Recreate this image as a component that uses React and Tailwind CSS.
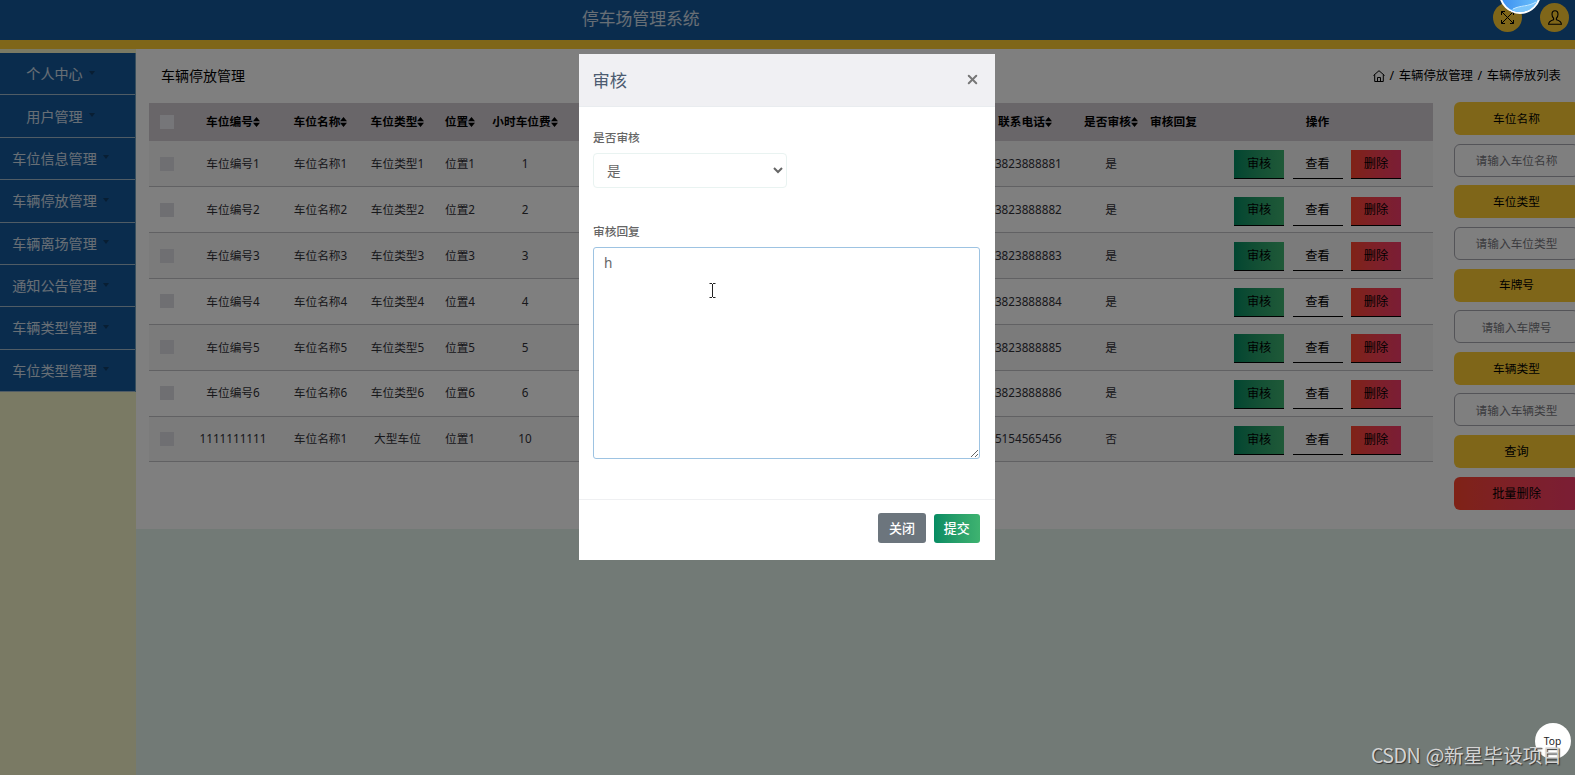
import React, { useState } from 'react';
import { X } from 'lucide-react';

const menuItems = [
  '个人中心', '用户管理', '车位信息管理', '车辆停放管理',
  '车辆离场管理', '通知公告管理', '车辆类型管理', '车位类型管理'
];

const rows = [
  { code: '车位编号1', name: '车位名称1', type: '车位类型1', place: '位置1', fee: '1', phone: '13823888881', passed: '是' },
  { code: '车位编号2', name: '车位名称2', type: '车位类型2', place: '位置2', fee: '2', phone: '13823888882', passed: '是' },
  { code: '车位编号3', name: '车位名称3', type: '车位类型3', place: '位置3', fee: '3', phone: '13823888883', passed: '是' },
  { code: '车位编号4', name: '车位名称4', type: '车位类型4', place: '位置4', fee: '4', phone: '13823888884', passed: '是' },
  { code: '车位编号5', name: '车位名称5', type: '车位类型5', place: '位置5', fee: '5', phone: '13823888885', passed: '是' },
  { code: '车位编号6', name: '车位名称6', type: '车位类型6', place: '位置6', fee: '6', phone: '13823888886', passed: '是' },
  { code: '1111111111', name: '车位名称1', type: '大型车位', place: '位置1', fee: '10', phone: '15154565456', passed: '否' }
];

const filters = [
  { label: '车位名称', placeholder: '请输入车位名称' },
  { label: '车位类型', placeholder: '请输入车位类型' },
  { label: '车牌号', placeholder: '请输入车牌号' },
  { label: '车辆类型', placeholder: '请输入车辆类型' }
];

const SortIcon = () => (
  <svg className="inline-block w-[7px] h-[10px] align-[-1px]" viewBox="0 0 7 10">
    <path d="M3.5 0L7 4.2H0zM3.5 10L0 5.8h7z" />
  </svg>
);

const SortHead = ({ children }) => (
  <th className="font-bold whitespace-nowrap">{children}<SortIcon /></th>
);

const Header = () => (
  <header className="h-[49px] shrink-0 flex bg-[#14589a] border-b-[9px] border-[#ffcc33]">
    <h1 className="flex-1 pl-[582px] pt-[7px] text-[16.8px] leading-6 text-white/80">停车场管理系统</h1>
    <div className="flex gap-[18.5px] pt-[2.5px] pr-[6px]">
      <button className="w-[29px] h-[29px] rounded-full bg-[#ffcc33] flex items-center justify-center">
        <svg className="w-[13px] h-[13px]" viewBox="0 0 13 13" fill="none" stroke="black" strokeWidth="1">
          <path d="M.5 4V.5H4M9 .5h3.5V4M12.5 9v3.5H9M4 12.5H.5V9M.5.5l12 12M12.5.5l-12 12" />
        </svg>
      </button>
      <button className="w-[29px] h-[29px] rounded-full bg-[#ffcc33] flex items-center justify-center">
        <svg className="w-[14px] h-[15px]" viewBox="0 0 14 15" fill="none" stroke="black" strokeWidth="1.1">
          <path d="M7 .7C4.8.7 4 2.2 4 4.2c0 1.900.7 3.300 1.600 4v1.500C3.500 10.400.6 11.300.6 14.200h12.800c0-2.900-2.900-3.800-5-4.500V8.200c.9-.7 1.600-2.100 1.600-4C10 2.200 9.200.7 7 .7z" />
        </svg>
      </button>
    </div>
  </header>
);

const Sidebar = () => (
  <aside className="w-[136px] shrink-0 bg-[#f4f4c8] pt-1">
    <ul className="border-r border-[#6d9cba]">
      {menuItems.map((item) => (
        <li
          key={item}
          className="h-[42.4px] pr-[14px] flex items-center justify-center gap-[6px] bg-[#14589a] border-b border-[#a0b8ca] text-[14.1px] text-white/80"
        >
          {item}
          <span className="mb-0.5 border-x-[3.5px] border-x-transparent border-t-[4px] border-t-[#103c66]" />
        </li>
      ))}
    </ul>
  </aside>
);

const RecordTable = () => (
  <table className="w-[1284px] table-fixed border-collapse text-center text-[11.7px] text-[#303036]">
    <colgroup>
      <col className="w-[37px]" />
      <col className="w-[94px]" />
      <col className="w-[81px]" />
      <col className="w-[73px]" />
      <col className="w-[52px]" />
      <col className="w-[78px]" />
      <col className="w-[409px]" />
      <col className="w-[104px]" />
      <col className="w-[68px]" />
      <col className="w-[57px]" />
      <col className="w-[231px]" />
    </colgroup>
    <thead>
      <tr className="h-[38px] bg-[#d2ccd3] text-black">
        <th><span className="block w-[14px] h-[14px] ml-[11px] bg-[#ececf2]" /></th>
        <SortHead>车位编号</SortHead>
        <SortHead>车位名称</SortHead>
        <SortHead>车位类型</SortHead>
        <SortHead>位置</SortHead>
        <SortHead>小时车位费</SortHead>
        <th />
        <SortHead>联系电话</SortHead>
        <SortHead>是否审核</SortHead>
        <th className="font-bold whitespace-nowrap">审核回复</th>
        <th className="font-bold">操作</th>
      </tr>
    </thead>
    <tbody>
      {rows.map((row) => (
        <tr key={row.phone} className="h-[45.85px] border-b border-[#c2c2c6] odd:bg-[#f6f6f6]">
          <td><span className="block w-[14px] h-[14px] ml-[11px] bg-[#dfdfe5]" /></td>
          <td>{row.code}</td>
          <td>{row.name}</td>
          <td>{row.type}</td>
          <td>{row.place}</td>
          <td>{row.fee}</td>
          <td />
          <td>{row.phone}</td>
          <td>{row.passed}</td>
          <td />
          <td>
            <div className="flex justify-center gap-[8.4px] pt-[2.5px] text-[12.2px] text-black">
              <button className="w-[50px] h-[29px] border-b border-black bg-linear-to-r from-[#008c62] to-[#3eb370]">审核</button>
              <button className="w-[50px] h-[29px] border-b border-black">查看</button>
              <button className="w-[50px] h-[29px] border-b border-black bg-linear-to-r from-[#ff452c] to-[#f63b6b]">删除</button>
            </div>
          </td>
        </tr>
      ))}
    </tbody>
  </table>
);

const FilterPanel = () => (
  <div className="w-[125px] shrink-0 flex flex-col gap-[8.65px] -mt-px text-[11.7px] text-black">
    {filters.map((f) => (
      <React.Fragment key={f.label}>
        <div className="h-[33px] rounded-md bg-[#ffcc33] flex items-center justify-center">{f.label}</div>
        <input
          placeholder={f.placeholder}
          className="h-[33px] w-full rounded-md border border-[#a8a8b0] text-center placeholder:text-[#777780]"
        />
      </React.Fragment>
    ))}
    <button className="h-[33px] pt-0.5 rounded-md bg-[#ffcc33] text-[12.2px]">查询</button>
    <button className="h-[33px] pt-0.5 rounded-md bg-linear-to-r from-[#ff452c] to-[#f63b6b] text-[12.2px]">批量删除</button>
  </div>
);

const ReviewDialog = () => {
  const [status, setStatus] = useState('是');
  const [reply, setReply] = useState('h');

  return (
    <div className="absolute inset-0 bg-black/50 pl-[579px] pt-[54px]">
      <div className="w-[415.5px] h-[506px] flex flex-col bg-white text-[#666]">
        <div className="h-[53px] shrink-0 pl-[13.5px] pr-[14.5px] flex items-center justify-between bg-[#f0f0f3] border-b border-[#e9ecef]">
          <h2 className="pt-0.5 text-[17.2px] text-[#4c5b70]">审核</h2>
          <button className="text-[#777] mb-0.5"><X className="w-[15px] h-[15px]" strokeWidth={3.2} /></button>
        </div>
        <div className="flex-1 px-[14px] pt-[22px] text-[11.7px]">
          <label className="block h-[24px] leading-4 font-medium">是否审核</label>
          <select
            value={status}
            onChange={(e) => setStatus(e.target.value)}
            className="block w-[194px] h-[35px] pl-[9px] rounded border border-[#e9f3f1] bg-white text-[13.6px]"
          >
            <option>是</option>
            <option>否</option>
          </select>
          <label className="block mt-[35px] h-[24px] leading-4 font-medium">审核回复</label>
          <textarea
            value={reply}
            onChange={(e) => setReply(e.target.value)}
            className="block w-[387px] h-[212px] px-[10px] py-[5px] rounded-[3px] border border-[#9dc3e2] outline-none text-[13.6px] leading-5"
          />
        </div>
        <div className="h-[61.5px] shrink-0 flex items-center justify-end gap-[7.5px] px-[14.5px] pb-[3px] border-t border-[#eff0f2] text-[13px] font-medium text-white">
          <button className="w-[48px] h-[30px] rounded-[3px] bg-[#6c757d]">关闭</button>
          <button className="w-[46.5px] h-[28.5px] rounded-[3px] bg-linear-to-r from-[#058c63] to-[#3eb370]">提交</button>
        </div>
      </div>
    </div>
  );
};

const App = () => {
  return (
    <div className="relative w-[1575px] h-[775px] overflow-hidden flex flex-col bg-[#e4f4ec] font-['Noto_Sans','Noto_Sans_CJK_SC',sans-serif]">
      <Header />
      <div className="flex flex-1">
        <Sidebar />
        <main className="w-[1439px] h-[480px] shrink-0 overflow-hidden bg-white pl-[13px]">
          <div className="h-[54px] pl-3 pr-[14px] flex items-center justify-between text-black">
            <h2 className="mb-0.5 text-[14px]">车辆停放管理</h2>
            <div className="flex items-center gap-[5px] text-[12.4px] [word-spacing:1.3px]">
              <svg className="w-[12px] h-[12px]" viewBox="0 0 12 12" fill="none" stroke="black" strokeWidth="1">
                <path d="M.5 5.500L6 .7l5.500 4.800M1.700 4.700v6.800h8.600V4.700M4.500 11.500V7.500h3v4" />
              </svg>
              <span>/ 车辆停放管理 / 车辆停放列表</span>
            </div>
          </div>
          <div className="flex items-start gap-[21px]">
            <RecordTable />
            <FilterPanel />
          </div>
        </main>
      </div>

      <ReviewDialog />

      {/* Text cursor */}
      <svg className="absolute left-[708.5px] top-[283px] w-[7px] h-[15px]" viewBox="0 0 7 15" fill="none" stroke="#222">
        <path d="M.5.500H3M4 .500h2.500M3.500 1v13M.5 14.500H3M4 14.500h2.500" />
      </svg>

      {/* Floating ball */}
      <div className="absolute left-[1499px] top-[-28px] w-[42px] h-[42px] rounded-full border-[2.5px] border-white bg-linear-to-r from-[#3b8ff0] to-[#6cc0fa] overflow-hidden">
        <svg className="w-full h-full" viewBox="0 0 38 38">
          <path d="M8 37C17 31 26 34 36 28v10H8z" fill="#7cc6fb" />
          <path d="M12 35C20 31 27 33 35 28" fill="none" stroke="#c4e8ff" strokeWidth="1" />
        </svg>
      </div>

      <div className="absolute left-[1534.5px] top-[723px] w-9 h-9 rounded-full bg-white flex items-center justify-center text-[10.2px] text-[#222] pt-0.5">
        Top
      </div>
      <div className="absolute right-[13px] bottom-[6px] whitespace-nowrap text-[19.7px] leading-7 text-[#d4d4d4] font-['Noto_Sans_CJK_SC',sans-serif] [text-shadow:1px_1px_1px_#333]">
        <span className="tracking-[-0.6px] [word-spacing:2px]">CSDN @</span>新星毕设项目
      </div>
    </div>
  );
};

export default App;
